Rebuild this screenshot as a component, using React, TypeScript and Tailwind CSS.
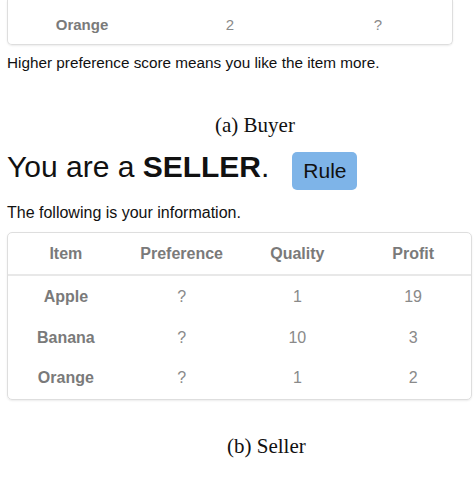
import React from "react";

const sans = { fontFamily: '"Liberation Sans", Arial, sans-serif' };
const serif = { fontFamily: '"Liberation Serif", "Times New Roman", serif' };

export default function App() {
  const rows = [
    ["Apple", "?", "1", "19"],
    ["Banana", "?", "10", "3"],
    ["Orange", "?", "1", "2"],
  ];
  return (
    <div className="w-[474px] h-[489px] bg-white overflow-hidden relative" style={sans}>
      {/* Buyer table remnant */}
      <div className="ml-[7px] w-[446px] h-[45px] border-x border-b border-[#dedede] rounded-b-[5px] shadow-[0_1px_2px_rgba(0,0,0,0.08)] grid grid-cols-3 items-center pt-[6px]">
        <div className="text-center text-[15px] font-bold text-[#7a7a7a]">Orange</div>
        <div className="text-center text-[15px] text-[#8a8a8a]">2</div>
        <div className="text-center text-[15px] text-[#8a8a8a]">?</div>
      </div>
      <p className="ml-[7px] mt-[9px] text-[15.3px] text-[#111] leading-[18px]">
        Higher preference score means you like the item more.
      </p>
      <div className="mt-[41px] pl-[215px] text-[21px] leading-[24px] text-[#111]" style={serif}>
        (a) Buyer
      </div>

      {/* Seller */}
      <div className="mt-[15px] ml-[7px] flex items-start h-[38px]">
        <h1 className="text-[30px] leading-[30px] text-[#111]">
          You are a <span className="font-bold">SELLER</span>.
        </h1>
        <button className="ml-[23px] w-[65px] h-[38px] rounded-[5px] bg-[#7eb4e8] text-[21px] text-[#111]">
          Rule
        </button>
      </div>
      <p className="ml-[7px] mt-[14px] text-[16px] text-[#111] leading-[18px]">
        The following is your information.
      </p>
      <div className="ml-[7px] mt-[10px] w-[465px] border border-[#dedede] rounded-[5px] shadow-[0_1px_2px_rgba(0,0,0,0.08)]">
        <div className="grid grid-cols-4 h-[43px] items-center border-b-2 border-[#e8e8e8] text-[16px] font-bold text-[#7a7a7a]">
          <div className="text-center">Item</div>
          <div className="text-center">Preference</div>
          <div className="text-center">Quality</div>
          <div className="text-center">Profit</div>
        </div>
        <div className="pt-[1px]">
          {rows.map((r) => (
            <div key={r[0]} className="grid grid-cols-4 h-[40.5px] items-center text-[16px]">
              <div className="text-center font-bold text-[#7a7a7a]">{r[0]}</div>
              <div className="text-center text-[#8a8a8a]">{r[1]}</div>
              <div className="text-center text-[#8a8a8a]">{r[2]}</div>
              <div className="text-center text-[#8a8a8a]">{r[3]}</div>
            </div>
          ))}
        </div>
      </div>
      <div className="mt-[34px] pl-[227px] text-[21px] leading-[24px] text-[#111]" style={serif}>
        (b) Seller
      </div>
    </div>
  );
}
